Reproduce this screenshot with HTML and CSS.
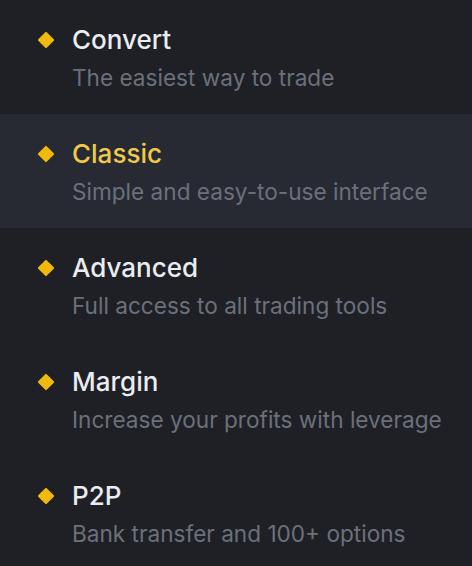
FILE: index.html
```html
<!DOCTYPE html>
<html>
<head>
<meta charset="utf-8">
<link rel="stylesheet" href="styles.css">
</head>
<body>
<ul class="menu">
  <li class="item">
    <div class="head"><span class="mark"><span class="diamond"></span></span><span class="title">Convert</span></div>
    <div class="desc">The easiest way to trade</div>
  </li>
  <li class="item active">
    <div class="head"><span class="mark"><span class="diamond"></span></span><span class="title">Classic</span></div>
    <div class="desc">Simple and easy-to-use interface</div>
  </li>
  <li class="item">
    <div class="head"><span class="mark"><span class="diamond"></span></span><span class="title">Advanced</span></div>
    <div class="desc">Full access to all trading tools</div>
  </li>
  <li class="item">
    <div class="head"><span class="mark"><span class="diamond"></span></span><span class="title">Margin</span></div>
    <div class="desc">Increase your profits with leverage</div>
  </li>
  <li class="item">
    <div class="head"><span class="mark"><span class="diamond"></span></span><span class="title">P2P</span></div>
    <div class="desc">Bank transfer and 100+ options</div>
  </li>
</ul>
</body>
</html>
```
FILE: styles.css
```css
html, body {
  margin: 0;
  padding: 0;
  background: #1e2026;
}
body {
  width: 472px;
  height: 566px;
  overflow: hidden;
  font-family: Inter, "Noto Sans", sans-serif;
}
.menu {
  list-style: none;
  margin: 0;
  padding: 0;
}
.item {
  height: 114px;
  box-sizing: border-box;
  padding: 22px 0 0 36px;
}
.item.active {
  background: #272a33;
}
.head {
  display: flex;
  align-items: center;
  height: 36px;
}
.mark {
  width: 20px;
  height: 20px;
  display: flex;
  align-items: center;
  justify-content: center;
  margin-right: 16px;
}
.diamond {
  width: 12px;
  height: 12px;
  background: #f0b90b;
  transform: rotate(45deg);
  border-radius: 1px;
}
.title {
  font-size: 26px;
  line-height: 36px;
  color: #eaecef;
  font-weight: 500;
}
.active .title {
  color: #f0c94a;
}
.desc {
  margin: 2px 0 0 36px;
  font-size: 22.6px;
  line-height: 36px;
  color: #6b707b;
}
```
